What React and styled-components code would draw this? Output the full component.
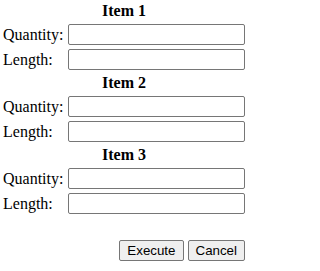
import React from "react";
import styled, { createGlobalStyle } from "styled-components";

const GlobalStyle = createGlobalStyle`
    body {
        margin: 0;
        background: #ffffff;
        font-family: "Liberation Serif", "Times New Roman", serif;
        font-size: 16px;
        color: #000000;
    }
`;

const Form = styled.form`
    display: grid;
    grid-template-columns: 61px 177px;
    column-gap: 4px;
    row-gap: 4px;
    padding: 2px 0 0 3px;
    width: 242px;
`;

const Heading = styled.div`
    grid-column: 1 / -1;
    height: 18px;
    line-height: 18px;
    text-align: center;
    font-weight: bold;
`;

const Label = styled.label`
    display: flex;
    align-items: center;
    height: 21px;
    line-height: 18px;
    white-space: nowrap;
`;

const Input = styled.input`
    box-sizing: border-box;
    width: 177px;
    height: 21px;
    margin: 0;
    padding: 1px 3px;
    border: 1px solid #767676;
    border-radius: 2px;
    background: #ffffff;
    font-family: "Liberation Sans", Arial, sans-serif;
    font-size: 13.333px;
`;

const Spacer = styled.div`
    grid-column: 1 / -1;
    height: 18px;
`;

const Actions = styled.div`
    grid-column: 1 / -1;
    display: flex;
    justify-content: flex-end;
    gap: 4px;
`;

const Button = styled.button`
    box-sizing: border-box;
    height: 21px;
    margin: 0;
    padding: 1px 7px;
    border: 1px solid #767676;
    border-radius: 2px;
    background: #efefef;
    color: #000000;
    font-family: "Liberation Sans", Arial, sans-serif;
    font-size: 13.333px;
    line-height: 15px;
`;

const items = [1, 2, 3];

const App = () => {
    return (
        <>
            <GlobalStyle />
            <Form onSubmit={(e) => e.preventDefault()}>
                {items.map((n) => (
                    <React.Fragment key={n}>
                        <Heading>Item {n}</Heading>
                        <Label htmlFor={`qty${n}`}>Quantity:</Label>
                        <Input id={`qty${n}`} type="text" />
                        <Label htmlFor={`len${n}`}>Length:</Label>
                        <Input id={`len${n}`} type="text" />
                    </React.Fragment>
                ))}
                <Spacer />
                <Actions>
                    <Button type="submit">Execute</Button>
                    <Button type="button">Cancel</Button>
                </Actions>
            </Form>
        </>
    );
};

export default App;
